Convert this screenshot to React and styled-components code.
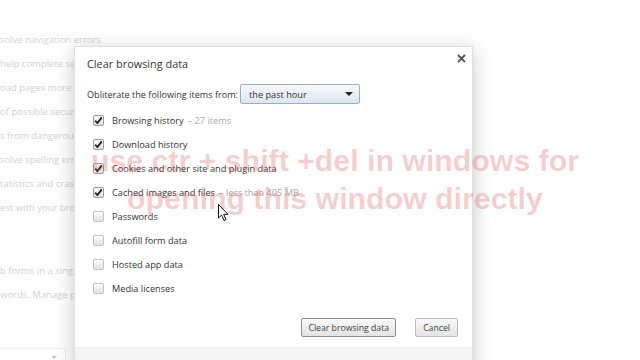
import React from "react";
import styled, { createGlobalStyle } from "styled-components";

const Global = createGlobalStyle`
  html, body { margin: 0; padding: 0; background: #fff; }
  body { width: 640px; height: 360px; overflow: hidden; font-family: "Open Sans", "Noto Sans", sans-serif; }
`;

const Screen = styled.div`
  position: relative;
  width: 640px;
  height: 360px;
  overflow: hidden;
  background: #fff;
`;

const Page = styled.div`
  display: flex;
  flex-direction: column;
  padding-top: 32px;
`;

const PageLine = styled.div`
  height: ${(p) => p.h || 24}px;
  line-height: 16px;
  font-size: 9.5px;
  color: #d2d2d2;
  white-space: nowrap;
`;

const PageSelect = styled.div`
  position: absolute;
  left: -4px;
  bottom: -6px;
  width: 70px;
  height: 18px;
  border: 1px solid #ececec;
  display: flex;
  justify-content: flex-end;
  align-items: center;
  padding-right: 8px;
  box-sizing: border-box;
  &::after {
    content: "";
    border: 3px solid transparent;
    border-top: 3px solid #c4c4c4;
    margin-top: 3px;
  }
`;

const Dialog = styled.div`
  position: absolute;
  left: 74px;
  top: 46px;
  width: 399px;
  background: #fff;
  border: 1px solid rgba(0, 0, 0, 0.12);
  box-sizing: border-box;
  box-shadow: 0 4px 18px rgba(0, 0, 0, 0.22);
  display: flex;
  flex-direction: column;
  color: #333;
`;

const Header = styled.div`
  padding: 9px 12px 0;
  height: 25px;
  box-sizing: border-box;
`;

const Title = styled.div`
  font-size: 10.9px;
  line-height: 16px;
  color: #333;
`;

const Close = styled.div`
  position: absolute;
  right: 5px;
  top: 5px;
  width: 12px;
  height: 12px;
  display: flex;
  align-items: center;
  justify-content: center;
`;

const Content = styled.div`
  padding: 0 12px;
  display: flex;
  flex-direction: column;
`;

const FromRow = styled.div`
  margin-top: 12px;
  display: flex;
  align-items: center;
  gap: 2px;
  font-size: 9.1px;
  height: 20px;
`;

const Select = styled.div`
  width: 120px;
  height: 20px;
  box-sizing: border-box;
  border: 1px solid #8fb0d4;
  border-radius: 2px;
  background: linear-gradient(#f7f9fc, #dfe6ef);
  display: flex;
  align-items: center;
  justify-content: space-between;
  padding: 0 6px 0 8px;
  font-size: 9.2px;
  color: #333;
  &::after {
    content: "";
    border: 4px solid transparent;
    border-top: 4px solid #222;
    margin-top: 4px;
  }
`;

const List = styled.div`
  margin-top: 4px;
  padding-left: 6px;
  display: flex;
  flex-direction: column;
`;

const Row = styled.div`
  height: 24px;
  display: flex;
  align-items: center;
  gap: 8px;
  font-size: 9.2px;
  color: #333;
`;

const Box = styled.span`
  width: 11px;
  height: 11px;
  box-sizing: border-box;
  border: 1px solid ${(p) => (p.checked ? "#9a9a9a" : "#c2c2c2")};
  border-radius: 2px;
  background: linear-gradient(#fafafa, #e2e2e2);
  display: flex;
  align-items: center;
  justify-content: center;
`;

const Note = styled.span`
  color: #a8a8a8;
  margin-left: 4px;
`;

const Buttons = styled.div`
  margin-top: 18px;
  padding-right: 14px;
  display: flex;
  justify-content: flex-end;
  gap: 19px;
`;

const Button = styled.div`
  height: 19px;
  padding: 0 ${(p) => (p.primary ? 6 : 7)}px;
  box-sizing: border-box;
  border: 1px solid ${(p) => (p.primary ? "#8e8e8e" : "#bdbdbd")};
  border-radius: 2px;
  background: linear-gradient(#f8f8f8, #e4e4e4);
  font-size: 8.7px;
  color: #444;
  display: flex;
  align-items: center;
`;

const Footer = styled.div`
  margin-top: 10px;
  height: 30px;
  background: #f5f5f5;
  border-top: 1px solid #efefef;
`;

const Watermark = styled.div`
  position: absolute;
  left: 0;
  right: 0;
  top: 142px;
  display: flex;
  flex-direction: column;
  align-items: center;
  padding-left: 30px;
  font-family: "Liberation Sans", Arial, sans-serif;
  font-weight: bold;
  font-size: 30.3px;
  line-height: 38px;
  color: rgba(225, 80, 80, 0.28);
  pointer-events: none;
`;

const Cursor = styled.svg`
  position: absolute;
  left: 218px;
  top: 204px;
`;

const pageLines = [
  "solve navigation errors",
  "help complete searches",
  "oad pages more quickly",
  " of possible security",
  "s from dangerous sites",
  "solve spelling errors",
  "tatistics and crash",
  "est with your browsing",
];

const items = [
  { label: "Browsing history", note: "– 27 items", checked: true },
  { label: "Download history", checked: true },
  { label: "Cookies and other site and plugin data", checked: true },
  { label: "Cached images and files", note: "–  less than 405 MB", checked: true },
  { label: "Passwords" },
  { label: "Autofill form data" },
  { label: "Hosted app data" },
  { label: "Media licenses" },
];

const Check = () => (
  <svg width="9" height="9" viewBox="0 0 9 9">
    <path d="M1.2 4.6 L3.4 7 L7.8 1.4" fill="none" stroke="#222" strokeWidth="1.8" />
  </svg>
);

export default function App() {
  return (
    <Screen>
      <Global />
      <Page>
        {pageLines.map((t, i) => (
          <PageLine key={i}>{t}</PageLine>
        ))}
        <PageLine h={39} />
        <PageLine>b forms in a single click</PageLine>
        <PageLine>words. Manage passwords</PageLine>
      </Page>
      <PageSelect />
      <Dialog>
        <Header>
          <Title>Clear browsing data</Title>
          <Close>
            <svg width="9" height="9" viewBox="0 0 9 9">
              <path d="M1 1 L8 8 M8 1 L1 8" stroke="#555" strokeWidth="1.8" />
            </svg>
          </Close>
        </Header>
        <Content>
          <FromRow>
            <span>Obliterate the following items from:</span>
            <Select>the past hour</Select>
          </FromRow>
          <List>
            {items.map((it) => (
              <Row key={it.label}>
                <Box checked={it.checked}>{it.checked && <Check />}</Box>
                <span>
                  {it.label}
                  {it.note && <Note>{it.note}</Note>}
                </span>
              </Row>
            ))}
          </List>
        </Content>
        <Buttons>
          <Button primary>Clear browsing data</Button>
          <Button>Cancel</Button>
        </Buttons>
        <Footer />
      </Dialog>
      <Watermark>
        <div>use ctr + shift +del in windows for</div>
        <div>opening this window directly</div>
      </Watermark>
      <Cursor width="12" height="18" viewBox="0 0 12 18">
        <path d="M0.5 0.5 L0.5 14 L3.6 11 L6 16.5 L8 15.6 L5.7 10.3 L10 10.3 Z" fill="#fff" stroke="#111" strokeWidth="1" />
      </Cursor>
    </Screen>
  );
}
